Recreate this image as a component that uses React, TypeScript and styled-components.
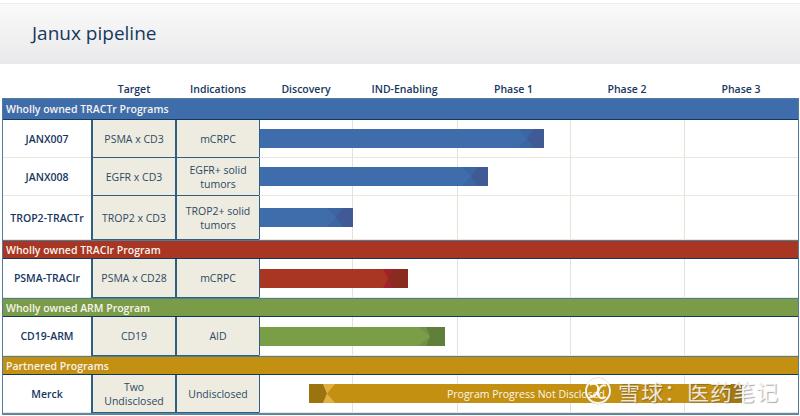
import React from 'react';
import styled, { createGlobalStyle } from 'styled-components';

const GlobalStyle = createGlobalStyle`
  html, body {
    margin: 0;
    padding: 0;
    background: #fff;
    overflow: hidden;
  }
  body {
    font-family: "Open Sans", "Liberation Sans", sans-serif;
  }
`;

const Page = styled.div`
  position: relative;
  width: 800px;
  height: 416px;
  padding-top: 3px;
  box-sizing: border-box;
  background: #fff;
  overflow: hidden;
`;

const TitleBar = styled.header`
  height: 61px;
  padding-left: 32px;
  display: flex;
  align-items: center;
  border-top: 1px solid #eeeeee;
  box-sizing: border-box;
  background: linear-gradient(#fafafa, #e9e9eb);
`;

const Title = styled.h1`
  margin: 0 0 2px;
  font-size: 19px;
  font-weight: 400;
  color: #17375e;
`;

const ColumnHeads = styled.div`
  display: grid;
  grid-template-columns: 89px 84px 84px 92px 105px 113px 114px 114px;
  height: 34px;
  padding-left: 3px;
  align-items: end;
`;

const ColumnHead = styled.div`
  padding-bottom: 2px;
  font-size: 10.5px;
  font-weight: 600;
  text-align: center;
  color: #17375e;
`;

const Table = styled.div`
  width: 797px;
  margin-left: 2px;
  box-sizing: border-box;
  border-left: 1px solid #4f7d99;
  border-right: 1px solid #4f7d99;
  border-bottom: 2px solid #5d87a0;
`;

const Band = styled.div<{ $color: string; $height: number }>`
  height: ${p => p.$height}px;
  box-sizing: border-box;
  display: flex;
  align-items: center;
  padding-left: 3px;
  background: ${p => p.$color};
  border-top: 1px solid #4f7d99;
  border-bottom: 1px solid #123a5c;
  font-size: 10.5px;
  font-weight: 600;
  color: #f6f4ee;
`;

const Row = styled.div<{ $height: number }>`
  display: grid;
  grid-template-columns: 88px 84px 84px 1fr;
  height: ${p => p.$height}px;
`;

const NameCell = styled.div`
  display: flex;
  align-items: center;
  justify-content: center;
  box-sizing: border-box;
  border-bottom: 1px solid #ebe7dd;
  font-size: 10.5px;
  font-weight: 600;
  color: #17375e;
`;

const InfoCell = styled.div`
  display: flex;
  align-items: center;
  justify-content: center;
  box-sizing: border-box;
  padding: 0 4px;
  background: #eeebe0;
  border-left: 2px solid #2f5f7f;
  border-bottom: 1px solid #2f5f7f;
  font-size: 10.5px;
  line-height: 14px;
  text-align: center;
  color: #2b4a63;
`;

const ChartCell = styled.div`
  display: flex;
  align-items: center;
  box-sizing: border-box;
  border-left: 1px solid #2f5f7f;
  border-bottom: 1px solid #ebe7dd;
  background:
    linear-gradient(#e6e2d8, #e6e2d8) 92px 0 / 1px 100% no-repeat,
    linear-gradient(#e6e2d8, #e6e2d8) 197px 0 / 1px 100% no-repeat,
    linear-gradient(#e6e2d8, #e6e2d8) 310px 0 / 1px 100% no-repeat,
    linear-gradient(#e6e2d8, #e6e2d8) 424px 0 / 1px 100% no-repeat;
`;

const Bar = styled.div<{ $left: number; $width: number; $color: string }>`
  display: flex;
  align-items: stretch;
  justify-content: space-between;
  height: 19px;
  width: ${p => p.$width}px;
  margin-left: ${p => p.$left}px;
  background: ${p => p.$color};
`;

const BarLabel = styled.div`
  flex: 1;
  display: flex;
  align-items: center;
  justify-content: center;
  padding-right: 4px;
  font-size: 10.5px;
  white-space: nowrap;
  color: #fbf7ea;
`;

const Watermark = styled.div`
  position: absolute;
  left: 583px;
  top: 373px;
  display: flex;
  align-items: center;
  gap: 5px;
  font-family: "Noto Sans CJK SC", sans-serif;
  font-size: 22px;
  letter-spacing: 1px;
  white-space: nowrap;
  color: rgba(255, 255, 255, 0.82);
  text-shadow: 1px 1px 1px rgba(70, 70, 70, 0.45);
`;

const WatermarkMark = styled.svg`
  display: block;
  flex: none;
  margin-top: 3px;
`;

const BarEnd = ({ tri, dark, width = 26, mid = 9, top = 16 }: { tri: string; dark: string; width?: number; mid?: number; top?: number }) => (
  <svg width={width} height={19} viewBox={`0 0 ${width} 19`} style={{ display: 'block' }}>
    <polygon points={`0,0 ${top},0 ${mid},9.5`} fill={tri} />
    <polygon points={`0,19 ${top},19 ${mid},9.5`} fill={tri} />
    <polygon points={`${top},0 ${width},0 ${width},19 ${top},19 ${mid},9.5`} fill={dark} />
  </svg>
);

const BarStart = () => (
  <svg width={27} height={19} viewBox="0 0 27 19" style={{ display: 'block', flex: 'none' }}>
    <polygon points="0,0 14,0 18,9.5 14,19 0,19" fill="#9c740f" />
    <polygon points="14,0 26,0 18,9.5" fill="#e0b040" />
    <polygon points="14,19 26,19 18,9.5" fill="#e0b040" />
  </svg>
);

const WatermarkLogo = () => (
  <WatermarkMark width={30} height={30} viewBox="0 0 30 30" fill="none" stroke="rgba(255,255,255,0.9)" strokeWidth={2}>
    <circle cx={15} cy={15} r={13} stroke="rgba(120,120,120,0.45)" strokeWidth={1} />
    <circle cx={15} cy={15} r={12} />
    <path d="M7 9c5-3 9 0 8 5s-5 8-8 6" />
    <path d="M23 21c-5 3-9 0-8-5s5-8 8-6" />
  </WatermarkMark>
);

const BLUE = { base: '#3f6dab', tri: '#3c65a4', dark: '#3f5a95' };
const RED = { base: '#a93622', tri: '#a5202a', dark: '#8a2b20' };
const GREEN = { base: '#7a9e48', tri: '#6f9244', dark: '#5f7f3a' };

const programs = {
  blue: [
    { name: 'JANX007', target: 'PSMA x CD3', indication: 'mCRPC', width: 284, height: 38 },
    { name: 'JANX008', target: 'EGFR x CD3', indication: 'EGFR+ solid tumors', width: 228, height: 38 },
    { name: 'TROP2-TRACTr', target: 'TROP2 x CD3', indication: 'TROP2+ solid tumors', width: 93, height: 44 },
  ],
};

const phases = ['Target', 'Indications', 'Discovery', 'IND-Enabling', 'Phase 1', 'Phase 2', 'Phase 3'];

export default function App() {
  return (
    <Page>
      <GlobalStyle />
      <TitleBar>
        <Title>Janux pipeline</Title>
      </TitleBar>
      <ColumnHeads>
        <div />
        {phases.map(p => (
          <ColumnHead key={p}>{p}</ColumnHead>
        ))}
      </ColumnHeads>
      <Table>
        <Band $color="#3f6dab" $height={22}>Wholly owned TRACTr Programs</Band>
        {programs.blue.map(item => (
          <Row key={item.name} $height={item.height}>
            <NameCell>{item.name}</NameCell>
            <InfoCell>{item.target}</InfoCell>
            <InfoCell>{item.indication}</InfoCell>
            <ChartCell>
              <Bar $left={0} $width={item.width} $color={BLUE.base}>
                <span />
                <BarEnd tri={BLUE.tri} dark={BLUE.dark} />
              </Bar>
            </ChartCell>
          </Row>
        ))}
        <Band $color="#a93622" $height={19}>Wholly owned TRACIr Program</Band>
        <Row $height={39}>
          <NameCell>PSMA-TRACIr</NameCell>
          <InfoCell>PSMA x CD28</InfoCell>
          <InfoCell>mCRPC</InfoCell>
          <ChartCell>
            <Bar $left={0} $width={148} $color={RED.base}>
              <span />
              <BarEnd tri={RED.tri} dark={RED.dark} width={25} mid={5} top={10} />
            </Bar>
          </ChartCell>
        </Row>
        <Band $color="#7a9c48" $height={19}>Wholly owned ARM Program</Band>
        <Row $height={39}>
          <NameCell>CD19-ARM</NameCell>
          <InfoCell>CD19</InfoCell>
          <InfoCell>AID</InfoCell>
          <ChartCell>
            <Bar $left={0} $width={185} $color={GREEN.base}>
              <span />
              <BarEnd tri={GREEN.tri} dark={GREEN.dark} width={27} mid={12} top={8} />
            </Bar>
          </ChartCell>
        </Row>
        <Band $color="#c39012" $height={19}>Partnered Programs</Band>
        <Row $height={38}>
          <NameCell>Merck</NameCell>
          <InfoCell>Two Undisclosed</InfoCell>
          <InfoCell>Undisclosed</InfoCell>
          <ChartCell>
            <Bar $left={49} $width={433} $color="#c39012">
              <BarStart />
              <BarLabel>Program Progress Not Disclosed</BarLabel>
              <BarEnd tri="#b5860f" dark="#a37a12" width={22} mid={6} top={10} />
            </Bar>
          </ChartCell>
        </Row>
      </Table>
      <Watermark>
        <WatermarkLogo />
        雪球：医药笔记
      </Watermark>
    </Page>
  );
}
